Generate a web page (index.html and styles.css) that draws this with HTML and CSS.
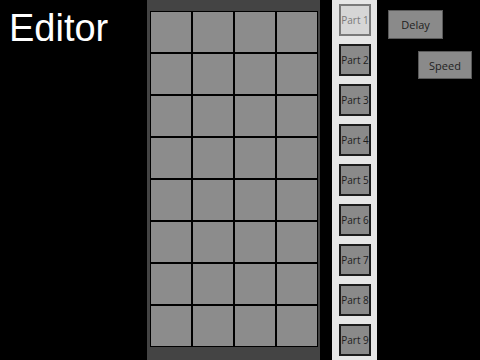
FILE: index.html
```html
<!DOCTYPE html>
<html lang="en">
<head>
    <meta charset="UTF-8">
    <title>Editor</title>
    <link rel="stylesheet" href="styles.css">
</head>
<body>
    <div class="title-col">
        <h1 class="title">Editor</h1>
    </div>

    <div class="pad-panel">
        <div class="pad-grid" id="grid"></div>
    </div>

    <div class="parts">
        <button class="part active">Part 1</button>
        <button class="part">Part 2</button>
        <button class="part">Part 3</button>
        <button class="part">Part 4</button>
        <button class="part">Part 5</button>
        <button class="part">Part 6</button>
        <button class="part">Part 7</button>
        <button class="part">Part 8</button>
        <button class="part">Part 9</button>
    </div>

    <div class="controls">
        <button class="ctrl delay">Delay</button>
        <button class="ctrl speed">Speed</button>
    </div>

    <script>
        const grid = document.getElementById('grid');
        for (let i = 0; i < 32; i++) {
            const cell = document.createElement('div');
            cell.className = 'cell';
            grid.appendChild(cell);
        }

        const parts = document.querySelectorAll('.part');
        parts.forEach(part => {
            part.addEventListener('click', () => {
                parts.forEach(p => p.classList.remove('active'));
                part.classList.add('active');
            });
        });
    </script>
</body>
</html>
```

FILE: styles.css
```css
body {
    margin: 0;
    height: 100vh;
    overflow: hidden;
    display: flex;
    background-color: #000000;
    font-family: "Open Sans", "Noto Sans", sans-serif;
}

.title-col {
    width: 147px;
    flex-shrink: 0;
}

.title {
    margin: 0;
    padding: 5px 0 0 9px;
    color: #ffffff;
    font-family: "Liberation Sans", sans-serif;
    font-weight: normal;
    font-size: 38px;
    line-height: 46px;
}

.pad-panel {
    width: 173px;
    flex-shrink: 0;
    box-sizing: border-box;
    padding: 11px 2px 0 3px;
    background-color: #444444;
}

.pad-grid {
    display: grid;
    grid-template-columns: repeat(4, 42px);
    grid-auto-rows: 42px;
}

.cell {
    box-sizing: border-box;
    border: 1px solid #000000;
    background-color: #8c8c8c;
}

.parts {
    width: 45px;
    flex-shrink: 0;
    margin-left: 12px;
    box-sizing: border-box;
    padding: 4px 0 0 7px;
    background-color: #e6e6e6;
}

.part {
    display: block;
    width: 32px;
    height: 32px;
    margin-bottom: 8px;
    padding: 0;
    box-sizing: border-box;
    border: 2px solid #1c1c1c;
    background-color: #8a8a8a;
    color: #1e1e1e;
    font-family: "Open Sans", "Noto Sans", sans-serif;
    font-size: 10px;
    white-space: nowrap;
    overflow: hidden;
    cursor: pointer;
}

.part.active {
    border-color: #7a7a7a;
    background-color: #d6d6d6;
    color: #7a7a7a;
}

.controls {
    flex: 1;
    padding: 10px 0 0 11px;
    display: flex;
    flex-direction: column;
    align-items: flex-start;
}

.ctrl {
    box-sizing: border-box;
    border: 1px solid #5a5a5a;
    background-color: #8a8a8a;
    color: #1e1e1e;
    font-family: "Open Sans", "Noto Sans", sans-serif;
    font-size: 11px;
    cursor: pointer;
}

.delay {
    width: 55px;
    height: 29px;
}

.speed {
    width: 54px;
    height: 28px;
    margin: 12px 0 0 30px;
}
```
